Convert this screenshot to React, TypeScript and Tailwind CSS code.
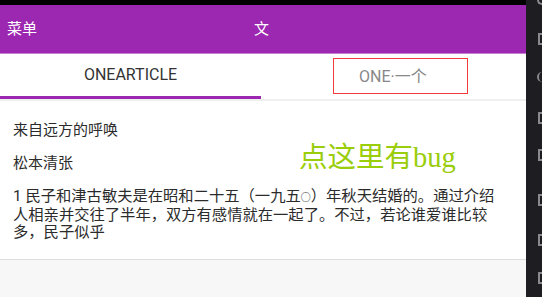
import React from "react";

const cjk = { fontFamily: 'Roboto, "Noto Sans CJK SC", sans-serif' };

function SideGlyph({ round = false }: { round?: boolean }) {
    return round ? (
        <div className="h-[10px] w-[5px] rounded-l-full border-l-2 border-[#8a8a8e]" />
    ) : (
        <div className="h-[12px] w-[4px] border-y-2 border-l-2 border-[#8a8a8e]" />
    );
}

export default function App() {
    return (
        <div className="flex h-[297px] w-[542px] overflow-hidden" style={cjk}>
            {/* Phone screen */}
            <div className="flex w-[526px] flex-col bg-[#f7f7f7]">
                <div className="h-[5px] bg-black" />

                {/* Toolbar */}
                <div className="flex h-[48px] items-center bg-[#9c27b0] text-[15px] text-white">
                    <span className="pl-[7px]">菜单</span>
                    <span className="ml-[217px]">文</span>
                </div>
                <div className="h-px bg-[#c77fd3]" />

                {/* Tabs */}
                <div className="flex h-[45px] bg-white">
                    <div className="flex w-[261px] flex-col">
                        <div className="flex flex-1 items-center justify-center text-[16px] text-[#333]">
                            ONEARTICLE
                        </div>
                        <div className="h-[3px] bg-[#9c27b0]" />
                    </div>
                    <div className="flex flex-1 items-start pl-[72px] pt-[4px]">
                        <div className="flex h-[36px] w-[135px] items-center border border-solid border-[#f23a3a] pl-[25px] pt-[1px] text-[16px] text-[#888]">
                            ONE·一个
                        </div>
                    </div>
                </div>
                <div className="h-[2px] bg-[#efefef]" />

                {/* Article */}
                <div className="border-b border-[#dcdcdc] bg-white pb-[17px] pl-[13px] pt-[19px] text-[15px] text-[#2b2b2b]">
                    <div className="leading-[20px]">来自远方的呼唤</div>
                    <div className="mt-[2px] flex h-[32px] items-center">
                        <span className="mt-[10px] leading-[20px]">松本清张</span>
                        <span
                            className="ml-[226px] text-[28.5px] leading-[32px] text-[#9acd0a]"
                            style={{ fontFamily: '"Liberation Serif", "Noto Sans CJK SC", serif' }}
                        >
                            点这里有bug
                        </span>
                    </div>
                    <p className="mt-[14px] w-[490px] text-[15.3px] leading-[17.5px]">
                        1 民子和津古敏夫是在昭和二十五（一九五<span className="text-[10px]">○</span>）年秋天结婚的。通过介绍人相亲并交往了半年，双方有感情就在一起了。不过，若论谁爱谁比较多，民子似乎
                    </p>
                </div>
            </div>

            {/* Side strip */}
            <div className="flex w-[16px] flex-col items-end bg-[#1e1e22]">
                <div className="h-[5px] w-[5px] rounded-bl-full border-b-2 border-l-2 border-[#8a8a8e]" />
                <div className="mt-[28px]">
                    <SideGlyph />
                </div>
                <div className="mt-[27px]">
                    <SideGlyph round />
                </div>
                <div className="mt-[30px]">
                    <SideGlyph />
                </div>
                <div className="mt-[25px]">
                    <SideGlyph />
                </div>
                <div className="mt-[33px]">
                    <SideGlyph />
                </div>
                <div className="mt-[28px]">
                    <SideGlyph />
                </div>
                <div className="mt-[26px]">
                    <SideGlyph />
                </div>
            </div>
        </div>
    );
}
